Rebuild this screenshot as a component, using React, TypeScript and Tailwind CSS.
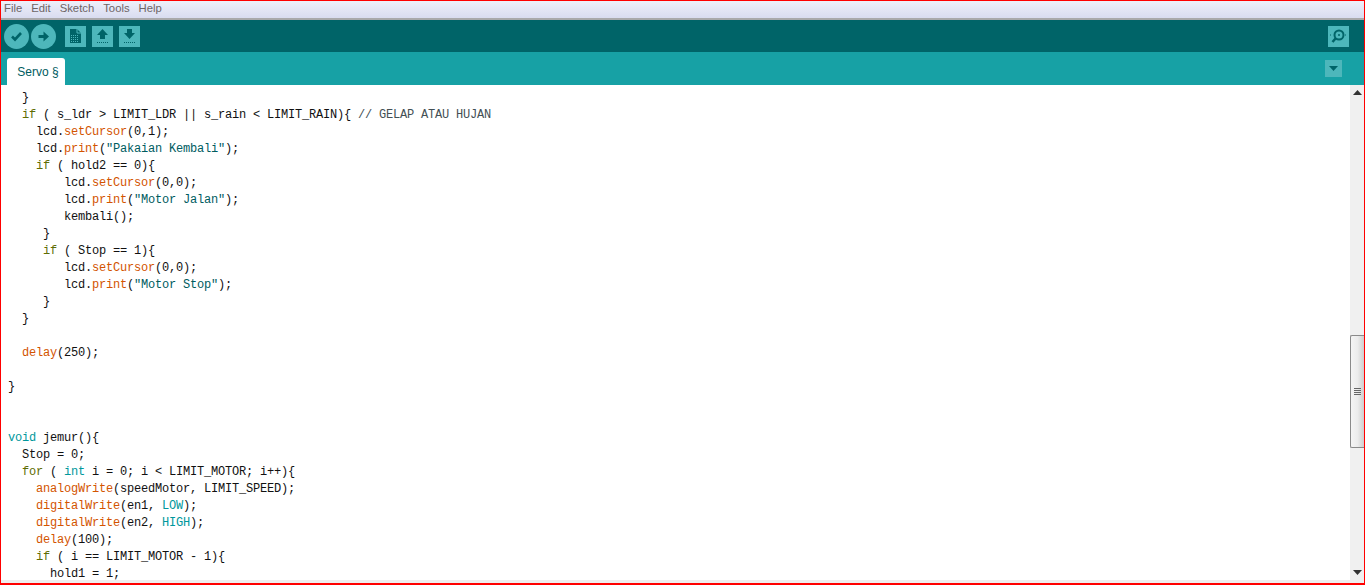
import React from "react";

type Tok = [string, string];
const K = "text-[#5e6d03]";
const F = "text-[#d35400]";
const S = "text-[#005c5f]";
const C = "text-[#00979c]";
const G = "text-[#434f54]";
const D = "text-[#111111]";

const lines: Tok[][] = [
  [["  }", D]],
  [["  ", D], ["if", K], [" ( s_ldr > LIMIT_LDR || s_rain < LIMIT_RAIN){ ", D], ["// GELAP ATAU HUJAN", G]],
  [["    lcd.", D], ["setCursor", F], ["(0,1);", D]],
  [["    lcd.", D], ["print", F], ["(", D], ['"Pakaian Kembali"', S], [");", D]],
  [["    ", D], ["if", K], [" ( hold2 == 0){", D]],
  [["        lcd.", D], ["setCursor", F], ["(0,0);", D]],
  [["        lcd.", D], ["print", F], ["(", D], ['"Motor Jalan"', S], [");", D]],
  [["        kembali();", D]],
  [["     }", D]],
  [["     ", D], ["if", K], [" ( Stop == 1){", D]],
  [["        lcd.", D], ["setCursor", F], ["(0,0);", D]],
  [["        lcd.", D], ["print", F], ["(", D], ['"Motor Stop"', S], [");", D]],
  [["     }", D]],
  [["  }", D]],
  [],
  [["  ", D], ["delay", F], ["(250);", D]],
  [],
  [["}", D]],
  [],
  [],
  [["void", C], [" jemur(){", D]],
  [["  Stop = 0;", D]],
  [["  ", D], ["for", K], [" ( ", D], ["int", C], [" i = 0; i < LIMIT_MOTOR; i++){", D]],
  [["    ", D], ["analogWrite", F], ["(speedMotor, LIMIT_SPEED);", D]],
  [["    ", D], ["digitalWrite", F], ["(en1, ", D], ["LOW", C], [");", D]],
  [["    ", D], ["digitalWrite", F], ["(en2, ", D], ["HIGH", C], [");", D]],
  [["    ", D], ["delay", F], ["(100);", D]],
  [["    ", D], ["if", K], [" ( i == LIMIT_MOTOR - 1){", D]],
  [["      hold1 = 1;", D]],
];

function ToolSquare({ children }: { children: React.ReactNode }) {
  return (
    <div className="w-[21px] h-[21px] bg-[#4db7bb] flex items-center justify-center">
      {children}
    </div>
  );
}

export default function App() {
  return (
    <div className="w-[1365px] h-[585px] overflow-hidden border-x-[1px] border-t-[1px] border-b-[2px] border-[#ff0000] flex flex-col bg-white font-['Liberation_Sans',sans-serif]">
      <div className="h-[17px] shrink-0 bg-gradient-to-b from-[#eef0fa] to-[#d9dcf0] flex items-center gap-[9px] pl-[3px] pb-[2px] text-[11.3px] text-[#6d6466] leading-none">
        <span>File</span>
        <span>Edit</span>
        <span>Sketch</span>
        <span>Tools</span>
        <span>Help</span>
      </div>
      <div className="h-[2px] shrink-0 bg-[#a9a9ab]" />
      <div className="h-[32px] shrink-0 bg-[#006468] flex items-center pl-[3px] pr-[15px] pt-[1px]">
        <div className="flex items-center gap-[2px]">
          <div className="w-[25px] h-[25px] rounded-full bg-[#4db7bb] flex items-center justify-center">
            <svg width="15" height="15" viewBox="0 0 15 15" fill="none">
              <path d="M3 7.500l3 3 6-6.500" stroke="#006468" strokeWidth="2.600" />
            </svg>
          </div>
          <div className="w-[25px] h-[25px] rounded-full bg-[#4db7bb] flex items-center justify-center">
            <svg width="15" height="15" viewBox="0 0 15 15">
              <path d="M2.500 6h5V2.500L13 7.500l-5.500 5V9h-5z" fill="#006468" />
            </svg>
          </div>
        </div>
        <div className="flex items-center gap-[6px] ml-[9px]">
          <ToolSquare>
            <svg width="15" height="17" viewBox="0 0 15 17">
              <path d="M2 1h7l4 4v10H2z" fill="#006468" />
              <path d="M9 1v4h4" fill="none" stroke="#4db7bb" />
              <path d="M3 7.500h8M3 9.500h8M3 11.500h8M3 13.500h8" stroke="#4db7bb" strokeWidth="1" strokeDasharray="1 1" fill="none" />
            </svg>
          </ToolSquare>
          <ToolSquare>
            <svg width="17" height="17" viewBox="0 0 17 17">
              <path d="M8.500 1L14 7h-3v4H6V7H3z" fill="#006468" />
              <path d="M3 14.500h11" stroke="#006468" strokeDasharray="1 1" fill="none" />
            </svg>
          </ToolSquare>
          <ToolSquare>
            <svg width="17" height="17" viewBox="0 0 17 17">
              <path d="M6 1h5v4h3l-5.500 6L3 5h3z" fill="#006468" />
              <path d="M3 14.500h11" stroke="#006468" strokeDasharray="1 1" fill="none" />
            </svg>
          </ToolSquare>
        </div>
        <div className="ml-auto">
          <ToolSquare>
            <svg width="19" height="19" viewBox="0 0 19 19" fill="none">
              <circle cx="10" cy="8" r="4.500" stroke="#006468" strokeWidth="2" />
              <circle cx="10" cy="8" r="1" fill="#006468" />
              <path d="M6.500 11.500L3.500 15" stroke="#006468" strokeWidth="2.500" />
              <path d="M1 8h2M16 8h2" stroke="#006468" strokeDasharray="1 1" />
            </svg>
          </ToolSquare>
        </div>
      </div>
      <div className="h-[33px] shrink-0 bg-[#17a1a5] flex items-end pl-[6px] pr-[22px]">
        <div className="w-[58px] h-[27px] bg-white rounded-t-[3px] text-[#005c5f] text-[12px] flex items-center justify-center pl-[4px]">
          Servo §
        </div>
        <div className="ml-auto self-center w-[17px] h-[17px] bg-[#4db7bb] flex items-center justify-center">
          <svg width="11" height="7" viewBox="0 0 11 7">
            <path d="M1 1h9L5.500 6z" fill="#006468" />
          </svg>
        </div>
      </div>
      <div className="flex-1 min-h-0 flex">
        <div className="flex-1 min-w-0 overflow-hidden pl-[7px] pt-[5px] font-['Liberation_Mono',monospace] text-[12px] tracking-[-0.2px] leading-[17px] whitespace-pre">
          {lines.map((l, i) => (
            <div key={i} className="h-[17px]">
              {l.map(([t, c], j) => (
                <span key={j} className={c}>{t}</span>
              ))}
            </div>
          ))}
        </div>
        <div className="w-[14px] shrink-0 bg-[#f0f0f0] flex flex-col items-center">
          <div className="h-[15px] shrink-0 flex items-center justify-center">
            <svg width="9" height="5" viewBox="0 0 9 5"><path d="M4.500 0L9 5H0z" fill="#333333" /></svg>
          </div>
          <div className="mt-[235px] w-[14px] h-[113px] border-y border-l border-[#8a8a8a] rounded-l-[2px] bg-gradient-to-r from-[#f4f4f4] via-[#ececec] to-[#cfcfcf] flex flex-col items-center justify-center gap-[1px]">
            <div className="w-[7px] h-[1px] bg-[#666666]" />
            <div className="w-[7px] h-[1px] bg-[#666666]" />
            <div className="w-[7px] h-[1px] bg-[#666666]" />
            <div className="w-[7px] h-[1px] bg-[#666666]" />
          </div>
          <div className="mt-auto h-[15px] shrink-0 flex items-center justify-center">
            <svg width="9" height="5" viewBox="0 0 9 5"><path d="M0 0h9L4.500 5z" fill="#333333" /></svg>
          </div>
        </div>
      </div>
      <div className="h-[3px] shrink-0 bg-[#eeeeee]" />
    </div>
  );
}
